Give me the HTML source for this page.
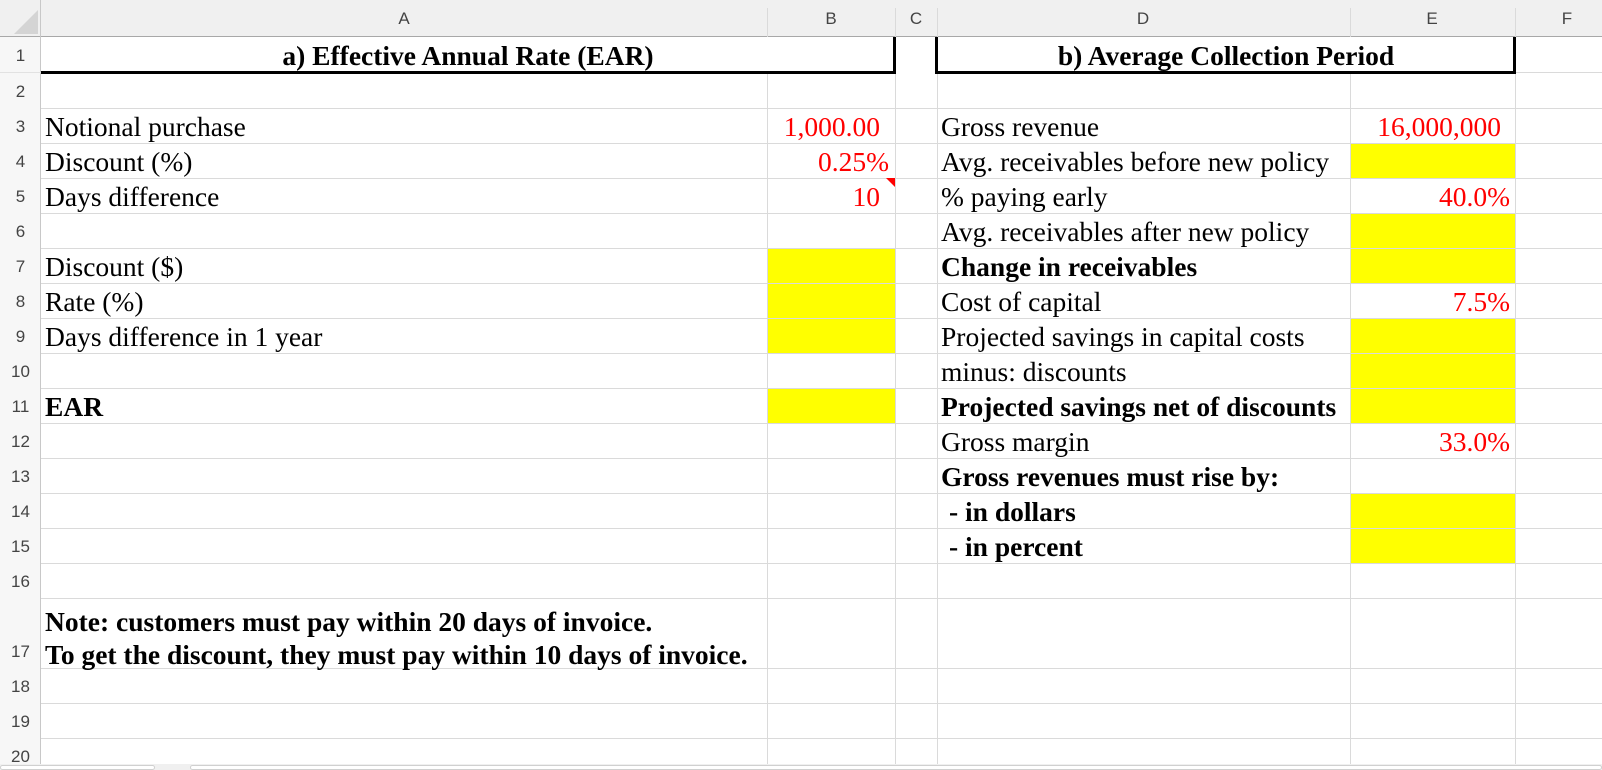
<!DOCTYPE html>
<html><head><meta charset="utf-8"><style>
body{margin:0;width:1602px;height:770px;overflow:hidden;background:#fff;position:relative;font-family:"Liberation Serif",serif}
div{position:absolute;box-sizing:border-box}
.t{font-size:27.5px;line-height:24px;white-space:nowrap;color:#000}
.b{font-weight:bold}
.r{color:#f00}
.rn{left:0;width:41px;text-align:center;font:17px/17px "Liberation Sans",sans-serif;color:#444}
.cl{top:10px;font:17px/17px "Liberation Sans",sans-serif;color:#444;text-align:center}
.h{height:1px;background:#dadada;left:41px;right:0}
.v{width:1px;background:#dadada}
.y{background:#ff0}
</style></head><body>
<div style="left:0;top:0;width:1602px;height:37px;background:#f0f0f0"></div>
<div style="left:0;top:37px;width:41px;height:733px;background:#f7f7f7"></div>
<div style="left:0;top:36px;width:1602px;height:1px;background:#a8a8a8"></div>
<div style="left:40px;top:0;width:1px;height:770px;background:#c8c8c8"></div>
<svg style="position:absolute;left:14px;top:10px" width="24" height="24"><polygon points="24,0 24,24 0,24" fill="#d4d4d4"/></svg>
<div class="v" style="left:767px;top:8px;height:29px"></div>
<div class="v" style="left:895px;top:8px;height:29px"></div>
<div class="v" style="left:937px;top:8px;height:29px"></div>
<div class="v" style="left:1350px;top:8px;height:29px"></div>
<div class="v" style="left:1515px;top:8px;height:29px"></div>
<div class="cl" style="left:384px;width:40px">A</div>
<div class="cl" style="left:811px;width:40px">B</div>
<div class="cl" style="left:896px;width:40px">C</div>
<div class="cl" style="left:1123px;width:40px">D</div>
<div class="cl" style="left:1412px;width:40px">E</div>
<div class="cl" style="left:1547px;width:40px">F</div>
<div class="y" style="left:767px;top:248px;width:128px;height:105px"></div>
<div class="y" style="left:767px;top:388px;width:128px;height:35px"></div>
<div class="y" style="left:1350px;top:143px;width:165px;height:35px"></div>
<div class="y" style="left:1350px;top:213px;width:165px;height:70px"></div>
<div class="y" style="left:1350px;top:318px;width:165px;height:105px"></div>
<div class="y" style="left:1350px;top:493px;width:165px;height:70px"></div>
<div class="h" style="top:108px"></div><div class="h" style="top:143px"></div><div class="h" style="top:178px"></div>
<div class="h" style="top:213px"></div><div class="h" style="top:248px"></div><div class="h" style="top:283px"></div>
<div class="h" style="top:318px"></div><div class="h" style="top:353px"></div><div class="h" style="top:388px"></div>
<div class="h" style="top:423px"></div><div class="h" style="top:458px"></div><div class="h" style="top:493px"></div>
<div class="h" style="top:528px"></div><div class="h" style="top:563px"></div><div class="h" style="top:598px"></div>
<div class="h" style="top:668px"></div><div class="h" style="top:703px"></div><div class="h" style="top:738px"></div>
<div class="h" style="top:72px;left:1515px"></div>
<div style="left:0;top:72px;width:41px;height:1px;background:#e2e2e2"></div>
<div class="v" style="left:767px;top:73px;height:697px"></div>
<div class="v" style="left:895px;top:73px;height:697px"></div>
<div class="v" style="left:937px;top:73px;height:697px"></div>
<div class="v" style="left:1350px;top:73px;height:697px"></div>
<div class="v" style="left:1515px;top:37px;height:733px"></div>
<div style="left:41px;top:71px;width:854px;height:3px;background:#000"></div>
<div style="left:893px;top:37px;width:3px;height:37px;background:#000"></div>
<div style="left:935px;top:37px;width:3px;height:37px;background:#000"></div>
<div style="left:935px;top:71px;width:581px;height:3px;background:#000"></div>
<div style="left:1513px;top:37px;width:3px;height:37px;background:#000"></div>
<svg style="position:absolute;left:886px;top:178px" width="9" height="9"><polygon points="0,0 9,0 9,9" fill="#f00"/></svg>
<div class="rn" style="top:47px">1</div><div class="rn" style="top:83px">2</div><div class="rn" style="top:118px">3</div>
<div class="rn" style="top:153px">4</div><div class="rn" style="top:188px">5</div><div class="rn" style="top:223px">6</div>
<div class="rn" style="top:258px">7</div><div class="rn" style="top:293px">8</div><div class="rn" style="top:328px">9</div>
<div class="rn" style="top:363px">10</div><div class="rn" style="top:398px">11</div><div class="rn" style="top:433px">12</div>
<div class="rn" style="top:468px">13</div><div class="rn" style="top:503px">14</div><div class="rn" style="top:538px">15</div>
<div class="rn" style="top:573px">16</div><div class="rn" style="top:643px">17</div><div class="rn" style="top:678px">18</div>
<div class="rn" style="top:713px">19</div><div class="rn" style="top:748px">20</div>
<div class="t b" style="left:41px;width:854px;text-align:center;top:44px">a) Effective Annual Rate (EAR)</div>
<div class="t b" style="left:937px;width:578px;text-align:center;top:44px">b) Average Collection Period</div>
<div class="t" style="left:45px;top:115px">Notional purchase</div>
<div class="t" style="left:45px;top:150px">Discount (%)</div>
<div class="t" style="left:45px;top:185px">Days difference</div>
<div class="t" style="left:45px;top:255px">Discount ($)</div>
<div class="t" style="left:45px;top:290px">Rate (%)</div>
<div class="t" style="left:45px;top:325px">Days difference in 1 year</div>
<div class="t b" style="left:45px;top:395px">EAR</div>
<div class="t b" style="left:45px;top:605px;line-height:33px">Note: customers must pay within 20 days of invoice.<br>To get the discount, they must pay within 10 days of invoice.</div>
<div class="t r" style="right:722px;top:115px">1,000.00</div>
<div class="t r" style="right:713px;top:150px">0.25%</div>
<div class="t r" style="right:722px;top:185px">10</div>
<div class="t" style="left:941px;top:115px">Gross revenue</div>
<div class="t" style="left:941px;top:150px">Avg. receivables before new policy</div>
<div class="t" style="left:941px;top:185px">% paying early</div>
<div class="t" style="left:941px;top:220px">Avg. receivables after new policy</div>
<div class="t b" style="left:941px;top:255px">Change in receivables</div>
<div class="t" style="left:941px;top:290px">Cost of capital</div>
<div class="t" style="left:941px;top:325px">Projected savings in capital costs</div>
<div class="t" style="left:941px;top:360px">minus: discounts</div>
<div class="t b" style="left:941px;top:395px">Projected savings net of discounts</div>
<div class="t" style="left:941px;top:430px">Gross margin</div>
<div class="t b" style="left:941px;top:465px">Gross revenues must rise by:</div>
<div class="t b" style="left:949px;top:500px">- in dollars</div>
<div class="t b" style="left:949px;top:535px">- in percent</div>
<div class="t r" style="right:101px;top:115px">16,000,000</div>
<div class="t r" style="right:92px;top:185px">40.0%</div>
<div class="t r" style="right:92px;top:290px">7.5%</div>
<div class="t r" style="right:92px;top:430px">33.0%</div>
<div style="left:0;top:764px;width:1602px;height:6px;background:#f0f0f0"></div>
<div style="left:0;top:765px;width:155px;height:5px;background:#fff;border:1px solid #d0d0d0;border-radius:3px"></div>
<div style="left:190px;top:765px;width:1412px;height:5px;background:#fff;border:1px solid #d0d0d0;border-radius:3px"></div>
</body></html>
